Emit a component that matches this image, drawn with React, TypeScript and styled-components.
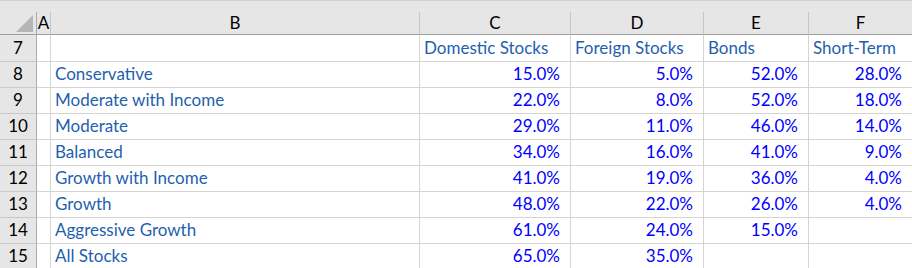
import React from 'react';
import styled, { createGlobalStyle } from 'styled-components';

const GlobalStyle = createGlobalStyle`
  html, body {
    margin: 0;
    padding: 0;
    background: #ffffff;
  }
  body {
    font-family: Lato, "Liberation Sans", sans-serif;
    overflow: hidden;
  }
`;

const COLS = '37px 14px 369px 151px 133px 105px 104px';

const Page = styled.div`
  width: 912px;
  height: 268px;
  overflow: hidden;
  background: #ffffff;
`;

const TopStrip = styled.div`
  height: 12px;
  box-sizing: border-box;
  background: #e6e6e6;
  border-top: 1px solid #d2d2d2;
`;

const Sheet = styled.div`
  display: grid;
  grid-template-columns: ${COLS};
  grid-template-rows: 23px 27px repeat(8, 26px);
  width: 913px;
`;

const Corner = styled.div`
  box-sizing: border-box;
  background: #e6e6e6;
  border-right: 1px solid #ababab;
  border-bottom: 1px solid #9e9e9e;
  display: flex;
  align-items: flex-end;
  justify-content: flex-end;
  padding: 0 3px 2px 0;
`;

const Triangle = styled.div`
  width: 0;
  height: 0;
  border-left: 17px solid transparent;
  border-bottom: 17px solid #b5b5b5;
`;

const ColHead = styled.div`
  box-sizing: border-box;
  background: #e6e6e6;
  border-right: 1px solid #c6c6c6;
  border-bottom: 1px solid #9e9e9e;
  color: #000000;
  font-size: 17px;
  display: flex;
  align-items: flex-end;
  justify-content: center;
  padding-bottom: 3px;
  line-height: 1;
`;

const RowHead = styled.div`
  box-sizing: border-box;
  background: #e6e6e6;
  border-right: 1px solid #ababab;
  border-bottom: 1px solid #c9c9c9;
  color: #000000;
  font-size: 17px;
  display: flex;
  align-items: flex-end;
  justify-content: center;
  padding-bottom: 5px;
  line-height: 1;
`;

const Cell = styled.div<{ $num?: boolean }>`
  box-sizing: border-box;
  border-right: 1px solid #d4d4d4;
  border-bottom: 1px solid #d4d4d4;
  font-size: 17px;
  line-height: 1;
  color: ${p => (p.$num ? '#0000ff' : '#1f5fae')};
  display: flex;
  align-items: flex-end;
  justify-content: ${p => (p.$num ? 'flex-end' : 'flex-start')};
  padding: 0 ${p => (p.$num ? '10px' : '0')} 5px ${p => (p.$num ? '0' : '4px')};
  white-space: nowrap;
  overflow: visible;
`;

const letters = ['A', 'B', 'C', 'D', 'E', 'F'];

const rows: { n: number; label: string; vals: string[] }[] = [
  { n: 8, label: 'Conservative', vals: ['15.0%', '5.0%', '52.0%', '28.0%'] },
  { n: 9, label: 'Moderate with Income', vals: ['22.0%', '8.0%', '52.0%', '18.0%'] },
  { n: 10, label: 'Moderate', vals: ['29.0%', '11.0%', '46.0%', '14.0%'] },
  { n: 11, label: 'Balanced', vals: ['34.0%', '16.0%', '41.0%', '9.0%'] },
  { n: 12, label: 'Growth with Income', vals: ['41.0%', '19.0%', '36.0%', '4.0%'] },
  { n: 13, label: 'Growth', vals: ['48.0%', '22.0%', '26.0%', '4.0%'] },
  { n: 14, label: 'Aggressive Growth', vals: ['61.0%', '24.0%', '15.0%', ''] },
  { n: 15, label: 'All Stocks', vals: ['65.0%', '35.0%', '', ''] },
];

const headings = ['Domestic Stocks', 'Foreign Stocks', 'Bonds', 'Short-Term'];

const App = () => {
  return (
    <Page>
      <GlobalStyle />
      <TopStrip />
      <Sheet>
        <Corner>
          <Triangle />
        </Corner>
        {letters.map(l => (
          <ColHead key={l}>{l}</ColHead>
        ))}

        <RowHead>7</RowHead>
        <Cell />
        <Cell />
        {headings.map(h => (
          <Cell key={h}>{h}</Cell>
        ))}

        {rows.map(r => (
          <React.Fragment key={r.n}>
            <RowHead>{r.n}</RowHead>
            <Cell />
            <Cell>{r.label}</Cell>
            {r.vals.map((v, i) => (
              <Cell key={i} $num>
                {v}
              </Cell>
            ))}
          </React.Fragment>
        ))}
      </Sheet>
    </Page>
  );
};

export default App;
